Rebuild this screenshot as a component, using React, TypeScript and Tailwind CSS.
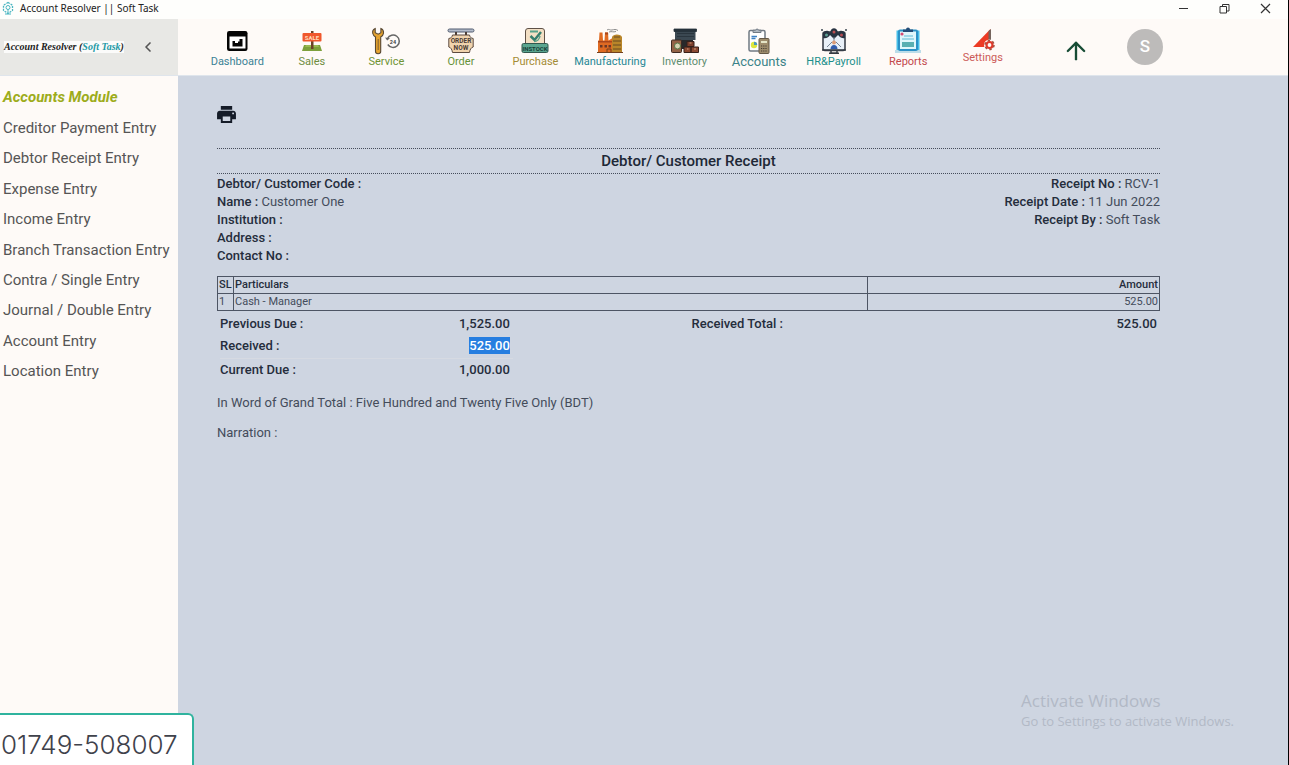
import type { ReactNode } from 'react'
import { ArrowUp, ChevronLeft } from 'lucide-react'
import { clsx } from 'clsx'

interface NavItem {
  name: string
  icon: ReactNode
  color: string
  size?: string
}

const iconBox = 'w-[30px] h-[28px]'

function DashboardIcon() {
  return (
    <svg viewBox="0 0 30 28" className={iconBox} aria-hidden="true">
      <rect x="5" y="4" width="20.5" height="20" rx="2.2" fill="#050505" />
      <rect x="7.5" y="9.5" width="16" height="12" fill="#fff" />
      <path d="M10.500 19.500v-5.500h2.500v2h3v-1.500h1.500v-2.500h3v7.500z" fill="#050505" />
    </svg>
  )
}

function SalesIcon() {
  return (
    <svg viewBox="0 0 30 28" className={iconBox} aria-hidden="true">
      <path d="M7 18h16l2 6H5z" fill="#7da03c" />
      <path d="M9 18h12l1 2H8z" fill="#9aba52" />
      <rect x="14" y="4" width="2.500" height="18" fill="#6b4128" />
      <rect x="5.500" y="6" width="19" height="8.500" rx="1" fill="#f0572c" />
      <text x="15" y="12.500" textAnchor="middle" fontSize="6" fontWeight="700" fill="#ffd9b8" className="font-[Roboto]">
        SALE
      </text>
    </svg>
  )
}

function ServiceIcon() {
  return (
    <svg viewBox="0 0 30 28" className={iconBox} aria-hidden="true">
      <path
        d="M4.200 1.500C2 2.500 1.300 4.500 1.800 6.500c.4 1.800 1.600 2.800 2.700 3.400v14.600c0 3 5.200 3 5.200 0V9.900c1.500-.8 2.600-2 2.800-3.800.2-2-.8-3.800-2.600-4.600v4.200L7.200 7.200 4.200 5.700z"
        fill="#e5a32f"
        stroke="#574733"
        strokeWidth="1.100"
      />
      <path d="M7.200 12v11" stroke="#8f6a31" strokeWidth="1.200" />
      <path d="M16.500 11.500a6.200 6.200 0 1 1 .3 6" fill="none" stroke="#666" strokeWidth="1.500" />
      <path d="M14 10.500l2.200 3 2.800-2.300z" fill="#666" />
      <text x="22" y="16.500" textAnchor="middle" fontSize="5.500" fontWeight="700" fill="#444" className="font-[Roboto]">
        24
      </text>
    </svg>
  )
}

function OrderIcon() {
  return (
    <svg viewBox="0 0 30 28" className={iconBox} aria-hidden="true">
      <rect x="2" y="2" width="26" height="3" rx="1.500" fill="#b4bccb" stroke="#535d70" />
      <path d="M10 5v3M20 5v3" stroke="#4b3d35" strokeWidth="2" />
      <path
        d="M6.500 8h17c.3 2 1.500 3.200 3.700 3.500v8.500c-2.200.5-3.200 2.500-3.700 5.500h-17c-.5-3-1.500-5-3.700-5.500v-8.500C5 11.200 6.200 10 6.500 8z"
        fill="#f0d3ad"
        stroke="#5d4b40"
        strokeLinejoin="round"
      />
      <text x="15" y="16" textAnchor="middle" fontSize="6.500" fontWeight="700" fill="#4a3c35" className="font-[Roboto]">
        ORDER
      </text>
      <text x="15" y="23" textAnchor="middle" fontSize="6.500" fontWeight="700" fill="#4a3c35" className="font-[Roboto]">
        NOW
      </text>
    </svg>
  )
}

function PurchaseIcon() {
  return (
    <svg viewBox="0 0 30 28" className={iconBox} aria-hidden="true">
      <rect x="5.500" y="1.500" width="19" height="18" rx="2.500" fill="#f3dfc4" stroke="#5f5147" />
      <path d="M10 3.500h8v2h-8z" fill="#57a28b" />
      <path d="M10.500 9l4 4 6.500-8" fill="none" stroke="#367f6e" strokeWidth="2.500" />
      <path d="M20 9c-.5 3-3 5.500-6 5.500" fill="none" stroke="#57a28b" strokeWidth="1.500" />
      <rect x="2" y="16.500" width="26" height="9" rx="1.500" fill="#5aa58f" stroke="#32584f" />
      <text x="15" y="23.500" textAnchor="middle" fontSize="6" fontWeight="700" fill="#173f38" className="font-[Roboto]">
        INSTOCK
      </text>
    </svg>
  )
}

function ManufacturingIcon() {
  return (
    <svg viewBox="0 0 30 28" className={iconBox} aria-hidden="true">
      <path d="M12 3c2-1.500 3 .5 5 0s4-1 6 .5M14 5c3-1 4 .5 7-.5" fill="none" stroke="#8b8b8b" />
      <path d="M4.500 5.500h3l.5 8h1.500l.5-8h3l.5 8 4-2.500v15H3V13.500h1z" fill="#df6a22" />
      <path d="M3 14h14v1.500H3zM10 5.500h3l.2 2H10z" fill="#a8461d" />
      <path d="M17 25V10c1-3 8-3.500 10 0v15z" fill="#b98529" />
      <path d="M19 10h6M18 14h8M18 18h8M18 22h8" stroke="#684b24" />
      <path d="M5 18h2.500v2.500H5zM9.500 18H12v2.500H9.500zM13.500 18H16v2.500h-2.500z" fill="#6b3826" />
      <path d="M12 25v-3h4v3M2 25.500h26" fill="none" stroke="#72401e" />
    </svg>
  )
}

function InventoryIcon() {
  return (
    <svg viewBox="0 0 30 28" className={iconBox} aria-hidden="true">
      <path d="M5 2h20.500v11H5z" fill="#3b4852" />
      <path d="M4 2h22.500v2.500H4zM7 6.500h17M7 9.500h17" fill="#26313a" stroke="#26313a" strokeWidth=".8" />
      <path d="M9 13h14v9H9z" fill="#28292b" />
      <rect x="1.500" y="13" width="10" height="12.500" rx="1" fill="#936246" stroke="#3d2a22" />
      <circle cx="7.500" cy="19" r="3" fill="#d6d3b2" stroke="#557846" />
      <path d="M17 14.500h7v5h-7z" fill="#7c3f2c" stroke="#37201b" />
      <path d="M14 20h7v5.500h-7zM21 20h7.500v5.500H21z" fill="#8b4932" stroke="#37201b" />
      <path d="M19.500 16h2M17 22h1.500M24 22h2" stroke="#d2a180" />
    </svg>
  )
}

function AccountsIcon() {
  return (
    <svg viewBox="0 0 30 28" className={iconBox} aria-hidden="true">
      <rect x="5" y="3.500" width="16" height="20.500" rx="1.500" fill="#fff" stroke="#707983" strokeWidth="1.500" />
      <path d="M9 5.500V3.200h2.500a1.700 1.700 0 0 1 3.200 0H17v2.300z" fill="#aeb7c0" stroke="#707983" />
      <path d="M7.500 9.500H13M7.500 11.500h4" stroke="#3e82c4" strokeWidth="1.500" />
      <circle cx="10" cy="18" r="3.200" fill="#dde63f" />
      <path d="M10 14.800a3.200 3.200 0 0 1 3.200 3.200H10z" fill="#4b98bd" />
      <rect x="15" y="11.500" width="10" height="15" rx="1" fill="#9e8c6c" stroke="#645846" />
      <path d="M17 14h6v2h-6z" fill="#e5e5c7" />
      <path d="M17 19h6M17 21.500h6M17 24h6" stroke="#443d34" strokeDasharray="1.200 1" />
    </svg>
  )
}

function PayrollIcon() {
  return (
    <svg viewBox="0 0 30 28" className={iconBox} aria-hidden="true">
      <rect x="4" y="5" width="22" height="18.500" rx="2" fill="#e9f0f8" stroke="#3d434c" strokeWidth="1.600" />
      <path d="M4 6c2-3 5-3 7-.5C12-.2 18-.2 19 5.500c2-2.500 5-2.500 7 .5v5c-4 1-6-2-7-3l-4 4-4-4c-1 2-4 4-7 3z" fill="#283341" />
      <circle cx="7.500" cy="8" r="1.500" fill="#5c9e91" />
      <circle cx="15" cy="5" r="1.500" fill="#bd4e50" />
      <circle cx="22.500" cy="8" r="1.500" fill="#b34a51" />
      <path d="M15 10v4M8 20l5-5M22 20l-5-5" stroke="#758291" />
      <circle cx="15" cy="15.500" r="2" fill="#db9b76" />
      <path d="M11.500 22c0-5.500 7-5.500 7 0z" fill="#315cac" />
      <path d="M3 23h24M12 24v2h6v-2M10 26.200h10" fill="none" stroke="#343b44" strokeWidth="1.500" />
      <circle cx="3" cy="3" r="1" fill="#39434e" />
      <circle cx="27" cy="3" r="1" fill="#39434e" />
    </svg>
  )
}

function ReportsIcon() {
  return (
    <svg viewBox="0 0 30 28" className={iconBox} aria-hidden="true">
      <path d="M3.500 3.500h4v20h-4zM22.500 3.500h4v20h-4z" fill="#45bde8" />
      <path d="M2 23h26v3H2z" fill="#bcdde9" />
      <rect x="6" y="3.500" width="18" height="19.500" rx="1" fill="#dff6fb" stroke="#2b91c6" strokeWidth="2" />
      <path d="M10 5V2.500h3a2 2 0 0 1 4 0h3V5z" fill="#234c77" />
      <path d="M11 9h9M9 12h12" stroke="#89cee2" strokeWidth="1.500" />
      <path d="M9 15h12v5H9z" fill="#59afb2" />
      <circle cx="9" cy="7" r="1.600" fill="#d64b72" />
    </svg>
  )
}

function SettingsIcon() {
  return (
    <svg viewBox="0 0 30 28" className={iconBox} aria-hidden="true">
      <path d="M5 20L22.500 2v18z" fill="#ec3b24" />
      <path d="M20.500 4l2.500-2v11h-2.500z" fill="#75645d" />
      <circle cx="21.500" cy="18" r="5.500" fill="#fefaf7" />
      <circle cx="21.500" cy="18" r="3" fill="none" stroke="#e0392a" strokeWidth="2.200" />
      <circle cx="21.500" cy="18" r="4.500" fill="none" stroke="#a8503f" strokeWidth="1.500" strokeDasharray="2.400 2.310" />
    </svg>
  )
}

const navItems: NavItem[] = [
  { name: 'Dashboard', icon: <DashboardIcon />, color: 'text-[#3c8295]' },
  { name: 'Sales', icon: <SalesIcon />, color: 'text-[#6e8d3f]' },
  { name: 'Service', icon: <ServiceIcon />, color: 'text-[#6f9435]' },
  { name: 'Order', icon: <OrderIcon />, color: 'text-[#66923a]' },
  { name: 'Purchase', icon: <PurchaseIcon />, color: 'text-[#a48c35]' },
  { name: 'Manufacturing', icon: <ManufacturingIcon />, color: 'text-[#1f8795]' },
  { name: 'Inventory', icon: <InventoryIcon />, color: 'text-[#5f8d70]' },
  { name: 'Accounts', icon: <AccountsIcon />, color: 'text-[#3b8388]', size: 'text-[13px]' },
  { name: 'HR&Payroll', icon: <PayrollIcon />, color: 'text-[#1c8f8b]' },
  { name: 'Reports', icon: <ReportsIcon />, color: 'text-[#c2484c]' },
  { name: 'Settings', icon: <SettingsIcon />, color: 'text-[#cc5a57]' },
]

const menu = [
  'Creditor Payment Entry',
  'Debtor Receipt Entry',
  'Expense Entry',
  'Income Entry',
  'Branch Transaction Entry',
  'Contra / Single Entry',
  'Journal / Double Entry',
  'Account Entry',
  'Location Entry',
]

function TitleBar() {
  return (
    <div className="h-[19px] flex items-start justify-between bg-[#fefefc]">
      <div className="flex items-center h-4 pl-[2px] gap-[6px]">
        <svg viewBox="0 0 12 14" className="w-3 h-[14px]" fill="none" stroke="#49b5c0" aria-hidden="true">
          <path d="M6 1.500l4.500 2.700v5.200L6 12.500 1.500 9.400V4.200z" strokeDasharray="2 1" strokeWidth="1.300" />
          <circle cx="6" cy="6.500" r="2" />
          <path d="M6 8.500v4M3 13h6" />
        </svg>
        <span className="font-['Noto_Sans',sans-serif] text-[10px] leading-4 text-[#222]">Account Resolver || Soft Task</span>
      </div>
      <div className="flex h-4 items-center gap-[30px] pr-[17px] text-[#333]">
        <button aria-label="Minimize" className="w-[11px] h-[11px]">
          <svg viewBox="0 0 11 11" stroke="currentColor"><path d="M1 5.500h9" /></svg>
        </button>
        <button aria-label="Restore" className="w-[11px] h-[11px]">
          <svg viewBox="0 0 11 11" fill="none" stroke="currentColor">
            <path d="M1 3.500h6.500V10H1zM3.500 3.500v-2H10V8H7.500" />
          </svg>
        </button>
        <button aria-label="Close" className="w-[11px] h-[11px]">
          <svg viewBox="0 0 11 11" stroke="currentColor" strokeWidth="1.200"><path d="M1 1l9 9M10 1l-9 9" /></svg>
        </button>
      </div>
    </div>
  )
}

function Header() {
  return (
    <header className="h-[57px] flex bg-[#fefaf7] border-b border-[#dfe5ec]">
      <div className="w-[178px] shrink-0 flex items-center bg-[#e8e8e5] pl-1 gap-4">
        <span className="bg-[#fbfbfa] font-['Liberation_Serif',serif] italic font-bold text-[10px] leading-3 text-[#222] whitespace-nowrap">
          Account Resolver (<span className="text-[#2299a5]">Soft Task</span>)
        </span>
        <button aria-label="Collapse menu">
          <ChevronLeft className="w-4 h-4 text-[#555]" strokeWidth={2.5} />
        </button>
      </div>
      <nav className="flex-1 flex pl-[22px]">
        {navItems.map((item) => (
          <a
            key={item.name}
            href="#"
            className={clsx('flex-1 basis-0 min-w-0 flex flex-col items-center pt-2', item.color, item.size ?? 'text-[11px]')}
          >
            {item.icon}
            <span className={clsx('leading-[14px]', item.name === 'Settings' && '-mt-1')}>{item.name}</span>
          </a>
        ))}
      </nav>
      <div className="w-[268px] shrink-0 flex items-center pl-[42px] gap-[37px]">
        <button aria-label="Scroll up" className="mt-2">
          <ArrowUp className="w-7 h-7 text-[#174c35]" strokeWidth={2} />
        </button>
        <button className="w-9 h-9 rounded-full bg-[#bdbbba] text-white text-[17px] font-medium">S</button>
      </div>
    </header>
  )
}

function Sidebar() {
  return (
    <aside className="w-[178px] shrink-0 bg-[#fefaf7] pl-[3px] pt-[6px]">
      <h2 className="h-[31px] leading-[31px] text-[15px] font-bold italic text-[#9dac1b]">Accounts Module</h2>
      <ul className="h-[273px] flex flex-col justify-between">
        {menu.map((entry) => (
          <li key={entry} className="leading-[30px] text-[15px] text-[#555] whitespace-nowrap">
            <a href="#">{entry}</a>
          </li>
        ))}
      </ul>
    </aside>
  )
}

function Field({ label, value }: { label: string; value?: string }) {
  return (
    <p>
      <b className="font-medium text-[#252d3c]">{label} :</b> {value}
    </p>
  )
}

function Receipt() {
  return (
    <main className="flex-1 min-w-0 bg-[#ced5e1] pl-[39px] pr-[128px] pt-[30px] text-[13px] text-[#444c5b]">
      <button aria-label="Print" className="block">
        <svg viewBox="2 3 20 18" className="w-[19px] h-[17px]" fill="#151c28">
          <path d="M19 8H5c-1.660 0-3 1.340-3 3v6h4v4h12v-4h4v-6c0-1.660-1.340-3-3-3zm-3 11H8v-5h8v5zm3-7c-.55 0-1-.45-1-1s.45-1 1-1 1 .45 1 1-.45 1-1 1zm-1-9H6v4h12V3z" />
        </svg>
      </button>

      <h1 className="mt-[25px] border-y border-dotted border-[#454c5a] text-center text-[15px] leading-6 font-medium text-[#202836]">
        Debtor/ Customer Receipt
      </h1>

      <div className="flex justify-between leading-[18px] pt-px">
        <div>
          <Field label="Debtor/ Customer Code" />
          <Field label="Name" value="Customer One" />
          <Field label="Institution" />
          <Field label="Address" />
          <Field label="Contact No" />
        </div>
        <div className="text-right">
          <Field label="Receipt No" value="RCV-1" />
          <Field label="Receipt Date" value="11 Jun 2022" />
          <Field label="Receipt By" value="Soft Task" />
        </div>
      </div>

      <table className="mt-[11px] w-full table-fixed border-collapse text-[11px] leading-4 [&_td]:border [&_th]:border [&_td]:border-[#4d5564] [&_th]:border-[#4d5564] [&_td]:px-px [&_th]:px-px">
        <colgroup>
          <col className="w-4" />
          <col />
          <col className="w-[31%]" />
        </colgroup>
        <thead>
          <tr className="text-left text-[#252d3c]">
            <th className="font-medium">SL</th>
            <th className="font-medium">Particulars</th>
            <th className="font-medium text-right">Amount</th>
          </tr>
        </thead>
        <tbody>
          <tr>
            <td>1</td>
            <td>Cash - Manager</td>
            <td className="text-right">525.00</td>
          </tr>
        </tbody>
      </table>

      <div className="grid grid-cols-2 font-medium text-[#252d3c] px-[3px] pt-[3px] leading-5">
        <table className="w-5/8">
          <tbody className="[&_th]:text-left [&_th]:font-medium [&_td]:text-right [&_td]:pr-[3px]">
            <tr className="h-5">
              <th>Previous Due :</th>
              <td>1,525.00</td>
            </tr>
            <tr className="h-6 border-b border-[#d6dae2]">
              <th>Received :</th>
              <td>
                <span className="bg-[#267ee0] text-white py-px">525.00</span>
              </td>
            </tr>
            <tr className="h-6">
              <th>Current Due :</th>
              <td>1,000.00</td>
            </tr>
          </tbody>
        </table>
        <div className="flex justify-between pl-[3px]">
          <span>Received Total :</span>
          <span>525.00</span>
        </div>
      </div>

      <p className="mt-3 leading-[18px]">In Word of Grand Total : Five Hundred and Twenty Five Only (BDT)</p>
      <p className="mt-3 leading-[18px]">Narration :</p>
    </main>
  )
}

export default function App() {
  return (
    <div className="relative min-h-screen flex flex-col border-r border-black font-[Roboto,sans-serif]">
      <TitleBar />
      <Header />
      <div className="flex-1 flex">
        <Sidebar />
        <Receipt />
      </div>

      {/* Support number */}
      <div className="absolute left-0 bottom-0 h-[52px] w-[194px] flex items-center pt-2 pl-px bg-white border-t-2 border-r-2 border-[#2fb39e] rounded-tr-md font-[Inter,sans-serif] font-light text-[26px] text-[#3f424b] whitespace-nowrap">
        01749-508007
      </div>

      {/* Activation watermark */}
      <div className="absolute right-[54px] bottom-[35px] font-['Open_Sans',sans-serif] text-[#b2b9c6]">
        <p className="text-[17px] leading-[22px]">Activate Windows</p>
        <p className="text-[13px] leading-[18px]">Go to Settings to activate Windows.</p>
      </div>
    </div>
  )
}
